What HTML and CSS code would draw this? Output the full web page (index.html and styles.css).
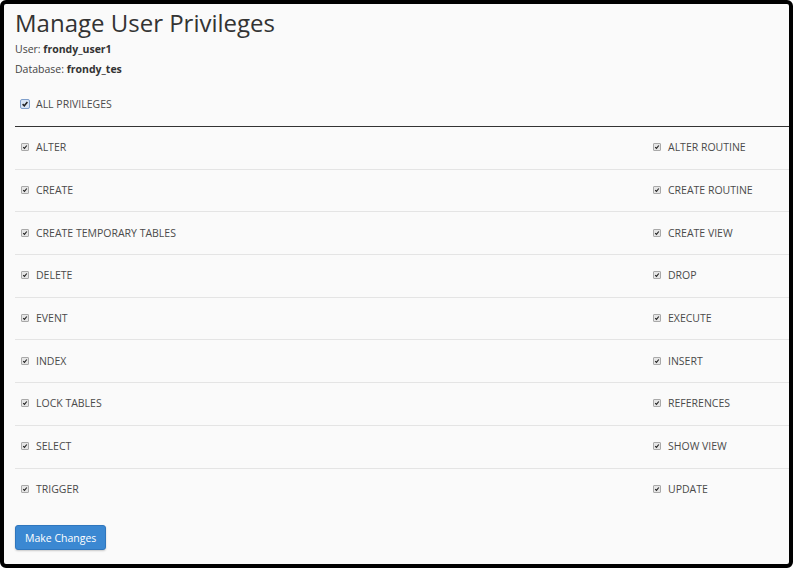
FILE: index.html
```html
<!DOCTYPE html>
<html lang="en">
<head>
  <meta charset="UTF-8">
  <meta name="viewport" content="width=device-width, initial-scale=1.0">
  <title>Manage User Privileges</title>
  <link rel="stylesheet" href="styles.css">
</head>
<body>

  <div class="frame">
    <!-- Header -->
    <div class="header">
      <h1>Manage User Privileges</h1>
      <p>User: <b>frondy_user1</b></p>
      <p>Database: <b>frondy_tes</b></p>
    </div>

    <!-- All privileges -->
    <div class="all-privs">
      <label><input type="checkbox" class="big" checked> ALL PRIVILEGES</label>
    </div>

    <!-- Privileges list -->
    <div class="privs">
      <div class="row">
        <label><input type="checkbox" checked> ALTER</label>
        <label><input type="checkbox" checked> ALTER ROUTINE</label>
      </div>
      <div class="row">
        <label><input type="checkbox" checked> CREATE</label>
        <label><input type="checkbox" checked> CREATE ROUTINE</label>
      </div>
      <div class="row">
        <label><input type="checkbox" checked> CREATE TEMPORARY TABLES</label>
        <label><input type="checkbox" checked> CREATE VIEW</label>
      </div>
      <div class="row">
        <label><input type="checkbox" checked> DELETE</label>
        <label><input type="checkbox" checked> DROP</label>
      </div>
      <div class="row">
        <label><input type="checkbox" checked> EVENT</label>
        <label><input type="checkbox" checked> EXECUTE</label>
      </div>
      <div class="row">
        <label><input type="checkbox" checked> INDEX</label>
        <label><input type="checkbox" checked> INSERT</label>
      </div>
      <div class="row">
        <label><input type="checkbox" checked> LOCK TABLES</label>
        <label><input type="checkbox" checked> REFERENCES</label>
      </div>
      <div class="row">
        <label><input type="checkbox" checked> SELECT</label>
        <label><input type="checkbox" checked> SHOW VIEW</label>
      </div>
      <div class="row">
        <label><input type="checkbox" checked> TRIGGER</label>
        <label><input type="checkbox" checked> UPDATE</label>
      </div>
    </div>

    <button class="btn">Make Changes</button>
  </div>

</body>
</html>
```

FILE: styles.css
```css
* {
  margin: 0;
  padding: 0;
  box-sizing: border-box;
}

body {
  font-family: 'Open Sans', sans-serif;
  background-color: #fff;
  color: #333;
}

/* Outer frame */
.frame {
  width: 793px;
  height: 568px;
  border: 4px solid #000;
  border-radius: 6px;
  background-color: #fafafa;
  overflow: hidden;
}

/* Header */
.header {
  padding-left: 11px;
}

.header h1 {
  font-size: 24px;
  font-weight: 400;
  line-height: 30px;
  margin-top: 4px;
  color: #333;
}

.header p {
  font-size: 10.5px;
  line-height: 20px;
  color: #444;
}

.header p:first-of-type {
  margin-top: 1px;
}

.header b {
  font-weight: 700;
  color: #333;
}

/* Checkboxes */
label {
  display: flex;
  align-items: center;
  gap: 6px;
  font-size: 10.5px;
  color: #4a4a4a;
  line-height: 20px;
}

input[type="checkbox"] {
  appearance: none;
  -webkit-appearance: none;
  width: 8px;
  height: 8px;
  border: 1px solid #a9a9a9;
  border-radius: 1px;
  background: #e6e6e6 url("data:image/svg+xml,%3Csvg xmlns='http://www.w3.org/2000/svg' viewBox='0 0 8 8'%3E%3Cpath d='M1.6 4.1 3.3 5.8 6.4 2' fill='none' stroke='%23222' stroke-width='1.5'/%3E%3C/svg%3E") center / 100% 100% no-repeat;
}

input.big {
  width: 10px;
  height: 10px;
  border-color: #7f9fcb;
  background-color: #d7e4f4;
  border-radius: 2px;
}

/* All privileges */
.all-privs {
  margin: 15px 0 0 11px;
  padding: 0 0 12px 5px;
  border-bottom: 1px solid #333;
}

/* Privileges list */
.privs {
  margin-left: 11px;
}

.row {
  display: grid;
  grid-template-columns: 632px 1fr;
  align-items: center;
  height: 42.7px;
  padding-left: 6px;
  padding-bottom: 1px;
  border-bottom: 1px solid #e4e4e4;
}

.row:last-child {
  border-bottom: none;
  height: 41.7px;
}

.row label {
  gap: 7px;
}

/* Button */
.btn {
  margin: 15px 0 0 11px;
  height: 25px;
  padding: 0 9px;
  font-family: 'Open Sans', sans-serif;
  font-size: 10.5px;
  color: #fff;
  background-color: #3b88d2;
  border: 1px solid #2f76bd;
  border-radius: 3px;
  box-shadow: 0 1px 2px rgba(0, 0, 0, 0.2);
}
```
